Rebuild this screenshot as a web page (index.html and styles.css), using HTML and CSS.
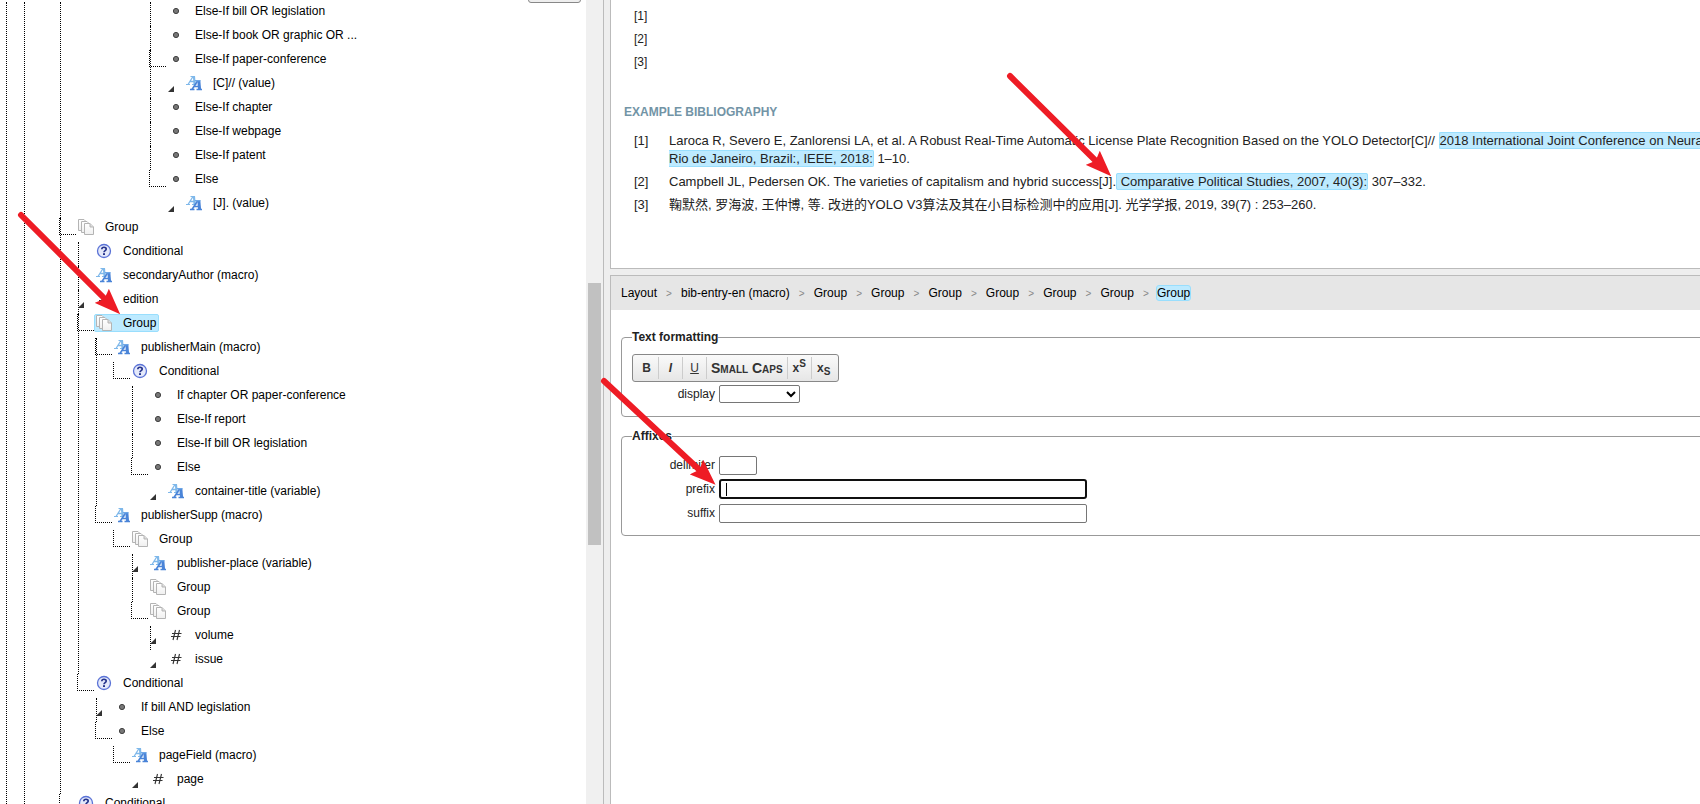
FILE: index.html
```html
<!DOCTYPE html>
<html lang="en">
<head>
<meta charset="utf-8">
<title>Style editor</title>
<link rel="stylesheet" href="styles.css">
</head>
<body>
<svg class="defs" aria-hidden="true">
  <defs>
    <linearGradient id="paper" x1="0" y1="0" x2="0" y2="1"><stop offset="0" stop-color="#fff"/><stop offset="1" stop-color="#f0f0f0"/></linearGradient>
    <symbol id="aa" viewBox="0 0 16 16">
      <g fill="none" stroke="#7fb8ea"><path d="M0 9.500h4M6 9.500h4.500M4.500 1.500h4.500"/><path d="M2 9.500 7 1.500M3.500 6.500H8" stroke-width="1.300"/><path d="M8 1.500 8.600 9.500" stroke-width="2.200"/></g>
      <g fill="none" stroke="#4a84d8"><path d="M4 14.500h4.500M10.500 14.500H16" stroke-width="1.400"/><path d="M6 14.500 11.500 6M8.500 11.500H13" stroke-width="1.600"/><path d="M12.800 5.500 13.600 14.500" stroke-width="3"/><path d="M9 5.700h5.500" stroke="#6aa5e6" stroke-width="1.300"/></g>
    </symbol>
    <symbol id="docs" viewBox="0 0 16 16">
      <g fill="url(#paper)" stroke="#b4b4b4"><path d="M.500 .500h5.500l2.500 2.500v8.500h-8z"/><path d="M3.500 2.500h5.500l2.500 2.500v8.500h-8z"/><path d="M6.500 4.500h5.500l3.500 3.500v7.500h-9z"/><path d="M12 4.500v3.500h3.500" fill="#ddd"/></g>
    </symbol>
    <symbol id="ask" viewBox="0 0 16 16">
      <circle cx="8" cy="8" r="6.500" fill="#e4e9fa" stroke="#5a72d6" stroke-width="1.300"/>
      <path d="M5.800 6.300C5.800 3.600 10.200 3.700 10.200 6c0 1.600-2.200 1.600-2.200 3.300" fill="none" stroke="#26348c" stroke-width="1.700"/><rect x="7" y="10.200" width="2" height="1.800" fill="#26348c"/>
    </symbol>
    <symbol id="dot" viewBox="0 0 16 16"><circle cx="8" cy="8" r="2.600" fill="#777" stroke="#404040"/></symbol>
    <symbol id="num" viewBox="0 0 16 16"><path d="M7.500 3 5 13M11.500 3 9 13M4 6.500h9.500M3 9.500h9.500" fill="none" stroke="#333" stroke-width="1.100"/></symbol>
    <marker id="head" viewBox="0 0 26 20" refX="13" refY="10" markerWidth="26" markerHeight="20" markerUnits="userSpaceOnUse" orient="auto"><path d="M0 0 26 10 0 20 4 10z" fill="#ee1c25"/></marker>
  </defs>
</svg>
<div class="app">
  <aside class="sidebar">
    <button class="more-button" type="button" aria-label="Actions"></button>
    <nav class="tree" aria-label="Style tree">
      <ul><li class="line"><ul><li class="line"><ul><li><ul>
        <li class="line"><ul><li><ul><li><ul><li><ul><li><ul>
          <li class="line"><a class="row" href="#"><svg><use href="#dot"/></svg>Else-If bill OR legislation</a></li>
          <li class="line"><a class="row" href="#"><svg><use href="#dot"/></svg>Else-If book OR graphic OR ...</a></li>
          <li class="line open"><a class="row" href="#"><svg><use href="#dot"/></svg>Else-If paper-conference</a>
            <ul><li class="leaf"><a class="row" href="#"><svg><use href="#aa"/></svg>[C]// (value)</a></li></ul></li>
          <li class="line"><a class="row" href="#"><svg><use href="#dot"/></svg>Else-If chapter</a></li>
          <li class="line"><a class="row" href="#"><svg><use href="#dot"/></svg>Else-If webpage</a></li>
          <li class="line"><a class="row" href="#"><svg><use href="#dot"/></svg>Else-If patent</a></li>
          <li class="open"><a class="row" href="#"><svg><use href="#dot"/></svg>Else</a>
            <ul><li class="leaf"><a class="row" href="#"><svg><use href="#aa"/></svg>[J]. (value)</a></li></ul></li>
        </ul></li></ul></li></ul></li></ul></li></ul></li>
        <li class="line open"><a class="row" href="#"><svg><use href="#docs"/></svg>Group</a>
          <ul>
            <li class="line"><a class="row" href="#"><svg><use href="#ask"/></svg>Conditional</a></li>
            <li class="line"><a class="row" href="#"><svg><use href="#aa"/></svg>secondaryAuthor (macro)</a></li>
            <li class="line leaf"><a class="row" href="#"><svg><use href="#num"/></svg>edition</a></li>
            <li class="line open"><a class="row selected" href="#"><svg><use href="#docs"/></svg>Group</a>
              <ul>
                <li class="line open"><a class="row" href="#"><svg><use href="#aa"/></svg>publisherMain (macro)</a>
                  <ul><li class="open"><a class="row" href="#"><svg><use href="#ask"/></svg>Conditional</a>
                    <ul>
                      <li class="line"><a class="row" href="#"><svg><use href="#dot"/></svg>If chapter OR paper-conference</a></li>
                      <li class="line"><a class="row" href="#"><svg><use href="#dot"/></svg>Else-If report</a></li>
                      <li class="line"><a class="row" href="#"><svg><use href="#dot"/></svg>Else-If bill OR legislation</a></li>
                      <li class="open"><a class="row" href="#"><svg><use href="#dot"/></svg>Else</a>
                        <ul><li class="leaf"><a class="row" href="#"><svg><use href="#aa"/></svg>container-title (variable)</a></li></ul></li>
                    </ul></li></ul></li>
                <li class="open"><a class="row" href="#"><svg><use href="#aa"/></svg>publisherSupp (macro)</a>
                  <ul><li class="open"><a class="row" href="#"><svg><use href="#docs"/></svg>Group</a>
                    <ul>
                      <li class="line leaf"><a class="row" href="#"><svg><use href="#aa"/></svg>publisher-place (variable)</a></li>
                      <li class="line"><a class="row" href="#"><svg><use href="#docs"/></svg>Group</a></li>
                      <li class="open"><a class="row" href="#"><svg><use href="#docs"/></svg>Group</a>
                        <ul>
                          <li class="line leaf"><a class="row" href="#"><svg><use href="#num"/></svg>volume</a></li>
                          <li class="leaf"><a class="row" href="#"><svg><use href="#num"/></svg>issue</a></li>
                        </ul></li>
                    </ul></li></ul></li>
              </ul></li>
            <li class="open"><a class="row" href="#"><svg><use href="#ask"/></svg>Conditional</a>
              <ul>
                <li class="line leaf"><a class="row" href="#"><svg><use href="#dot"/></svg>If bill AND legislation</a></li>
                <li class="open"><a class="row" href="#"><svg><use href="#dot"/></svg>Else</a>
                  <ul><li class="open"><a class="row" href="#"><svg><use href="#aa"/></svg>pageField (macro)</a>
                    <ul><li class="leaf"><a class="row" href="#"><svg><use href="#num"/></svg>page</a></li></ul></li></ul></li>
              </ul></li>
          </ul></li>
        <li class="open"><a class="row" href="#"><svg><use href="#ask"/></svg>Conditional</a></li>
      </ul></li></ul></li></ul></li></ul>
    </nav>
    <div class="scrollbar"><div class="thumb"></div></div>
  </aside>
  <main class="main">
    <section class="preview">
      <ol class="citations"><li>[1]</li><li>[2]</li><li>[3]</li></ol>
      <h2>EXAMPLE BIBLIOGRAPHY</h2>
      <div class="entry"><span>[1]</span><p>Laroca R, Severo E, Zanlorensi LA, et al. A Robust Real-Time Automatic License Plate Recognition Based on the YOLO Detector[C]// <mark>2018 International Joint Conference on Neural Networks.<br>Rio de Janeiro, Brazil:, IEEE, 2018:</mark> 1–10.</p></div>
      <div class="entry"><span>[2]</span><p>Campbell JL, Pedersen OK. The varieties of capitalism and hybrid success[J].<mark> Comparative Political Studies, 2007, 40(3):</mark> 307–332.</p></div>
      <div class="entry"><span>[3]</span><p lang="zh">鞠默然, 罗海波, 王仲博, 等. 改进的YOLO V3算法及其在小目标检测中的应用[J]. 光学学报, 2019, 39(7) : 253–260.</p></div>
    </section>
    <section class="editor">
      <nav class="crumbs" aria-label="Path">
        <a href="#">Layout</a><i>&gt;</i><a href="#">bib-entry-en (macro)</a><i>&gt;</i><a href="#">Group</a><i>&gt;</i><a href="#">Group</a><i>&gt;</i><a href="#">Group</a><i>&gt;</i><a href="#">Group</a><i>&gt;</i><a href="#">Group</a><i>&gt;</i><a href="#">Group</a><i>&gt;</i><a class="current" href="#">Group</a>
      </nav>
      <form class="form">
        <fieldset>
          <legend>Text formatting</legend>
          <div class="toolbar">
            <button type="button">B</button><button type="button" class="italic">I</button><button type="button" class="underline">U</button><button type="button" class="caps">Small Caps</button><button type="button">x<sup>S</sup></button><button type="button">x<sub>S</sub></button>
          </div>
          <div class="field"><label for="display">display</label><select id="display"><option></option></select></div>
        </fieldset>
        <fieldset>
          <legend>Affixes</legend>
          <div class="field"><label for="delimiter">delimiter</label><input id="delimiter" class="short" type="text"></div>
          <div class="field active"><label for="prefix">prefix</label><input id="prefix" type="text"></div>
          <div class="field"><label for="suffix">suffix</label><input id="suffix" type="text"></div>
        </fieldset>
      </form>
    </section>
  </main>
  <svg class="arrows" aria-hidden="true">
    <g stroke="#ee1c25" stroke-width="6" stroke-linecap="round">
      <line x1="21" y1="215" x2="111" y2="305" marker-end="url(#head)"/>
      <line x1="1010" y1="76" x2="1102" y2="167" marker-end="url(#head)"/>
      <line x1="604" y1="381" x2="706" y2="476" marker-end="url(#head)"/>
    </g>
  </svg>
</div>
</body>
</html>
```

FILE: styles.css
```css
* { box-sizing: border-box; }
body { margin: 0; font-family: "Liberation Sans", Arial, "Noto Sans CJK SC", sans-serif; font-size: 12px; color: #222; }
ul, ol { list-style: none; margin: 0; padding: 0; }
a { color: #000; text-decoration: none; }
.defs { position: absolute; width: 0; height: 0; }
.app { position: relative; display: flex; height: 100vh; overflow: hidden; background: #eee; }

.sidebar { position: relative; display: flex; flex: 0 0 604px; background: #fff; border-right: 1px solid #bbb; }
.more-button { position: absolute; top: -21px; right: 22px; width: 53px; height: 24px; border: 1px solid #888; border-radius: 3px; background: #eee; }
.tree { flex: 1; height: 100%; overflow: hidden; padding: 2px 0 0 6px; }
.tree ul ul { margin-left: 17px; }
.tree li { position: relative; display: flow-root; border-left: 1px solid transparent; }
.tree li.line { border-left: 1px dotted #000; }
.tree .open::before { content: ""; position: absolute; left: -2px; top: 0; width: 16px; height: 16px; border: dotted #000; border-width: 0 0 1px 1px; }
.tree .leaf::before { content: ""; position: absolute; left: -1px; top: 12px; width: 6px; height: 6px; background: #333; clip-path: polygon(100% 0, 100% 100%, 0 100%); }
.row { display: flex; align-items: center; width: max-content; height: 18px; margin: 0 0 6px 15px; padding: 0 2px 0 1px; border: 1px solid transparent; border-radius: 2px; }
.row svg { width: 16px; height: 16px; margin-right: 11px; }
.row.selected { background: #bdeaff; border-color: #99defd; }
.scrollbar { flex: 0 0 17px; background: #f0f0f0; padding: 283px 2px 0; }
.thumb { height: 262px; background: #c1c1c1; }

.main { flex: 1; min-width: 0; display: flex; flex-direction: column; padding-left: 6px; }
.preview { height: 269px; flex: none; overflow: hidden; border: 1px solid #bbb; border-width: 0 0 1px 1px; background: #fff; padding: 5px 0 0 13px; margin-bottom: 6px; }
.citations { padding-left: 10px; line-height: 15px; }
.citations li { padding: 4px 0; }
.preview h2 { margin: 30px 0 12px; font-size: 12px; line-height: 16px; color: #7294a6; }
.entry { display: flex; font-size: 13px; line-height: 18px; margin-bottom: 5px; padding-left: 10px; white-space: nowrap; }
.entry span { flex: 0 0 35px; }
.entry p { margin: 0; }
mark { color: inherit; background: #bdeaff; border: 1px solid #99defd; border-radius: 2px; }

.editor { flex: 1; background: #fff; border: 1px solid #bbb; border-width: 1px 0 0 1px; }
.crumbs { display: flex; align-items: center; height: 34px; padding-left: 10px; background: #e6e6e6; }
.crumbs i { width: 24px; text-align: center; font-size: 10px; font-style: normal; color: #888; }
.crumbs .current { margin-left: -2px; background: #bdeaff; border: 1px solid #99defd; border-radius: 3px; }
.form { padding: 20px 0 0 10px; }
fieldset { margin: 0 -10px 12px 0; border: 1px solid #999; border-radius: 4px; padding: 10px; }
legend { padding: 0; font-weight: bold; line-height: 14px; }
.toolbar { display: flex; width: max-content; height: 28px; padding: 2px; border: 1px solid #888; border-radius: 3px; background: linear-gradient(#fafafa, #e6e6e6); }
.toolbar button { padding: 0 4px; min-width: 24px; border: 0; border-right: 1px solid #ccc; background: none; font: bold 12px "Liberation Sans", Arial, sans-serif; color: #333; }
.toolbar button:last-child { border: 0; }
.toolbar sup, .toolbar sub { font-size: 10px; line-height: 0; }
.toolbar .italic { font-style: italic; }
.toolbar .underline { font-weight: normal; text-decoration: underline; }
.toolbar .caps { font-size: 14px; font-variant: small-caps; }
.field { position: relative; display: flex; align-items: center; height: 24px; }
.field label { flex: 0 0 83px; text-align: right; margin-right: 4px; }
.field input { width: 368px; height: 19px; border: 1px solid #767676; border-radius: 2px; background: #fff; padding: 1px 6px; }
.field .short { width: 38px; }
.field select { width: 81px; height: 18px; border: 1px solid #767676; border-radius: 2px; background: #fff; }
.field.active input { height: 20px; border: 2px solid #101010; border-radius: 3px; }
/* text cursor of the active field */
.field.active::after { content: ""; position: absolute; left: 94px; top: 6px; width: 1px; height: 13px; background: #000; }
.arrows { position: absolute; left: 0; top: 0; width: 100%; height: 100%; pointer-events: none; }
```
